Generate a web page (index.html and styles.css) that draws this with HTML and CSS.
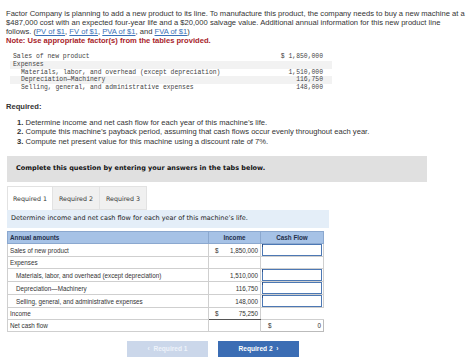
FILE: index.html
```html
<!DOCTYPE html>
<html>
<head>
<meta charset="utf-8">
<link rel="stylesheet" href="styles.css">
</head>
<body>
<div class="page">
  <p class="intro">Factor Company is planning to add a new product to its line. To manufacture this product, the company needs to buy a new machine at a $487,000 cost with an expected four-year life and a $20,000 salvage value. Additional annual information for this new product line<br>follows. (<a href="#">PV of $1</a>, <a href="#">FV of $1</a>, <a href="#">PVA of $1</a>, and <a href="#">FVA of $1</a>)<br><span class="note">Note: Use appropriate factor(s) from the tables provided.</span></p>

  <div class="mono">
    <div class="mrow"><span>Sales of new product</span><span>$ 1,850,000</span></div>
    <div class="mrow alt"><span>Expenses</span><span></span></div>
    <div class="mrow ind"><span>Materials, labor, and overhead (except depreciation)</span><span>1,510,000</span></div>
    <div class="mrow alt ind"><span>Depreciation—Machinery</span><span>116,750</span></div>
    <div class="mrow ind"><span>Selling, general, and administrative expenses</span><span>148,000</span></div>
  </div>

  <p class="req">Required:</p>
  <ol class="list">
    <li><b>1.</b> Determine income and net cash flow for each year of this machine’s life.</li>
    <li><b>2.</b> Compute this machine’s payback period, assuming that cash flows occur evenly throughout each year.</li>
    <li><b>3.</b> Compute net present value for this machine using a discount rate of 7%.</li>
  </ol>

  <div class="banner">Complete this question by entering your answers in the tabs below.</div>

  <div class="tabs">
    <div class="tab active">Required 1</div>
    <div class="tab">Required 2</div>
    <div class="tab">Required 3</div>
  </div>
  <div class="instr">Determine income and net cash flow for each year of this machine’s life.</div>

  <table class="grid">
    <tr class="head"><th class="c1">Annual amounts</th><th class="c2">Income</th><th class="c3">Cash Flow</th></tr>
    <tr><td>Sales of new product</td><td class="num"><span>$</span><span>1,850,000</span></td><td class="inp"><div class="box"><i></i></div></td></tr>
    <tr><td>Expenses</td><td></td><td></td></tr>
    <tr><td class="ind">Materials, labor, and overhead (except depreciation)</td><td class="num"><span></span><span>1,510,000</span></td><td class="inp"><div class="box"><i></i></div></td></tr>
    <tr><td class="ind">Depreciation—Machinery</td><td class="num"><span></span><span>116,750</span></td><td class="inp"><div class="box"><i></i></div></td></tr>
    <tr><td class="ind">Selling, general, and administrative expenses</td><td class="num"><span></span><span>148,000</span></td><td class="inp"><div class="box"><i></i></div></td></tr>
    <tr><td>Income</td><td class="num total"><span>$</span><span>75,250</span></td><td class="blank"></td></tr>
    <tr><td>Net cash flow</td><td></td><td class="num ncf"><span>$</span><span>0</span></td></tr>
  </table>

  <div class="nav">
    <div class="btn prev">&lsaquo;&nbsp; Required 1</div>
    <div class="btn next">Required 2 &nbsp;&rsaquo;</div>
  </div>
</div>
</body>
</html>
```

FILE: styles.css
```css
html, body { margin: 0; padding: 0; background: #fff; }
.page { padding: 9px 4px 0 6px; font-family: "Liberation Sans", Arial, sans-serif; color: #333; }
.intro { margin: 0; font-size: 7.6px; line-height: 9px; }
.intro a { color: #3a72b8; text-decoration: underline; }
.note { color: #a8232a; font-weight: bold; }

.mono { margin: 8px 0 0 4px; width: 322px; font-family: "Liberation Mono", "Courier New", monospace; font-size: 6.4px; color: #444; }
.mrow { display: flex; justify-content: space-between; height: 7.8px; line-height: 7.8px; padding: 0 9px 0 3px; }
.mrow.alt { background: #f2f2f2; }
.mrow.ind span:first-child { padding-left: 8px; }

.req { margin: 10px 0 0; font-size: 7.6px; font-weight: bold; color: #333; line-height: 9px; }
.list { list-style: none; margin: 7px 0 0; padding: 0 0 0 11px; font-size: 7.6px; line-height: 9.4px; }
.list b { color: #333; }

.banner { margin: 10px 0 0 1px; width: 411px; height: 26px; background: #e0e0e0; font-family: "DejaVu Sans", Verdana, sans-serif; font-weight: bold; font-size: 6.5px; color: #111; padding-left: 9px; line-height: 25px; }

.tabs { display: flex; margin: 4px 0 0 1px; height: 24px; font-family: "DejaVu Sans", Verdana, sans-serif; font-size: 6.3px; color: #333; }
.tab { width: 47px; box-sizing: border-box; background: #f0f0f0; border: 1px solid #e2e2e2; border-left: none; display: flex; align-items: center; justify-content: center; }
.tab.active { background: #fff; border-left: 1px solid #e2e2e2; border-bottom: none; width: 46px; }

.instr { margin-left: 1px; width: 318px; height: 18px; line-height: 17px; background: #e4eef8; font-family: "DejaVu Sans", Verdana, sans-serif; font-size: 6.5px; color: #222; padding-left: 4px; }

.grid { margin: 3px 0 0 1px; border-collapse: collapse; font-family: "Liberation Sans", Arial, sans-serif; font-size: 6.3px; color: #333; }
.grid th { background: #a6c2e6; border: 1px solid #8ba8cf; height: 11px; padding: 0 2px; font-weight: bold; color: #1f2f4a; }
.grid th.c1 { width: 196px; text-align: left; }
.grid th.c2 { width: 47px; text-align: center; }
.grid th.c3 { width: 58px; text-align: center; }
.grid td { border: 1px solid #cfcfcf; height: 11px; padding: 0 2px; white-space: nowrap; }
.grid td.ind { padding-left: 8px; }
.grid td.num { padding: 0 2px 0 6px; }
.num span:first-child { float: left; }
.num span:last-child { float: right; }
.grid td.inp { padding: 0 1px; }
.box { position: relative; height: 10px; border: 1px solid #4c78b4; background: #fff; }
.box i { position: absolute; left: -1px; top: -1px; width: 1px; height: 3px; background: #2b4f86; }
.grid td.total { border-bottom: 1.5px solid #555; }
.grid td.blank { border-right-color: #fff; border-bottom-color: #cfcfcf; }
.grid td.ncf { padding: 0 2px 0 7px; border: 1px solid #bbb; }

.nav { display: flex; gap: 10px; margin: 9px 0 0 121px; }
.btn { width: 81px; height: 16px; line-height: 16px; text-align: center; font-family: "Liberation Sans", Arial, sans-serif; font-size: 6.6px; font-weight: bold; color: #fff; }
.btn.prev { background: #cbd7ea; color: #eef3fa; }
.btn.next { background: #3b6db4; }
```
